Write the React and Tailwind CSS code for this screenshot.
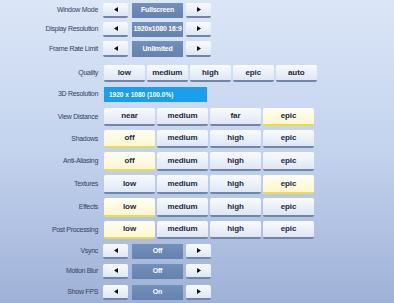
import React from 'react';

const font = { fontFamily: '"Liberation Sans", Arial, sans-serif' };

function Arrow({ dir }) {
  return (
    <svg width="4" height="5" viewBox="0 0 4 5">
      {dir === 'left' ? <path d="M0 2.5 L4 0 L4 5 Z" fill="#111" /> : <path d="M4 2.5 L0 0 L0 5 Z" fill="#111" />}
    </svg>
  );
}

function Btn({ children, active, className = '' }) {
  return (
    <div
      className={
        'flex items-center justify-center rounded-[2px] text-[8px] font-bold text-[#1d2843] h-full tracking-[-0.1px] ' +
        (active
          ? 'bg-gradient-to-b from-[#fffef2] to-[#fdf7cf] border-b-2 border-[#e9da5a] '
          : 'bg-gradient-to-b from-[#f8fbff] to-[#dfe7f4] border-b-2 border-[#7184a9] ') +
        className
      }
    >
      {children}
    </div>
  );
}

function Label({ children }) {
  return (
    <div className="w-[99px] pr-[1px] text-right text-[7px] text-[#34415e] tracking-[-0.3px] shrink-0 self-center">
      {children}
    </div>
  );
}

function Stepper({ label, value, className }) {
  return (
    <div className={'flex ' + className}>
      <Label>{label}</Label>
      <div className="ml-[4px] flex h-full">
        <Btn className="w-[25px]"><Arrow dir="left" /></Btn>
        <div className="ml-[4px] w-[51px] h-full flex items-center justify-center bg-gradient-to-b from-[#7390bb] to-[#6582af] text-white text-[7px] font-bold tracking-[-0.2px]">
          {value}
        </div>
        <Btn className="ml-[3px] w-[25px]"><Arrow dir="right" /></Btn>
      </div>
    </div>
  );
}

function Options({ label, items, active, className }) {
  return (
    <div className={'flex ' + className}>
      <Label>{label}</Label>
      <div className="ml-[5px] flex h-full gap-[2px]">
        {items.map((it, i) => (
          <Btn key={i} active={i === active} className="w-[51px]">{it}</Btn>
        ))}
      </div>
    </div>
  );
}

export default function App() {
  const four = ['medium', 'high', 'epic'];
  return (
    <div style={font} className="w-[394px] h-[303px] overflow-hidden bg-gradient-to-b from-[#dbe6f7] via-[#c3d3ee] to-[#9fb1d7] flex flex-col">
      <Stepper label="Window Mode" value="Fullscreen" className="mt-[3px] h-[15px]" />
      <Stepper label="Display Resolution" value="1920x1080 16:9" className="mt-[4px] h-[15px]" />
      <Stepper label="Frame Rate Limit" value="Unlimited" className="mt-[4px] h-[16px]" />
      <div className="flex mt-[8px] h-[17px]">
        <Label>Quality</Label>
        <div className="ml-[5px] flex h-full gap-[2.5px]">
          {['low', 'medium', 'high', 'epic', 'auto'].map((it) => (
            <Btn key={it} className="w-[40.5px]">{it}</Btn>
          ))}
        </div>
      </div>
      <div className="flex mt-[5px] h-[15px]">
        <Label>3D Resolution</Label>
        <div className="ml-[5px] w-[103px] h-full bg-[#1b9df0] flex items-center pl-[5px] text-white text-[6.5px] font-bold">
          1920 x 1080 (100.0%)
        </div>
      </div>
      <Options label="View Distance" items={['near', 'medium', 'far', 'epic']} active={3} className="mt-[6px] h-[18px]" />
      <Options label="Shadows" items={['off', ...four]} active={0} className="mt-[4px] h-[18px]" />
      <Options label="Anti-Aliasing" items={['off', ...four]} active={0} className="mt-[4px] h-[19px]" />
      <Options label="Textures" items={['low', ...four]} active={3} className="mt-[4px] h-[19px]" />
      <Options label="Effects" items={['low', ...four]} active={0} className="mt-[4px] h-[19px]" />
      <Options label="Post Processing" items={['low', ...four]} active={0} className="mt-[4px] h-[18px]" />
      <Stepper label="Vsync" value="Off" className="mt-[5px] h-[15px]" />
      <Stepper label="Motion Blur" value="Off" className="mt-[5px] h-[15px]" />
      <Stepper label="Show FPS" value="On" className="mt-[6px] h-[15px]" />
    </div>
  );
}
